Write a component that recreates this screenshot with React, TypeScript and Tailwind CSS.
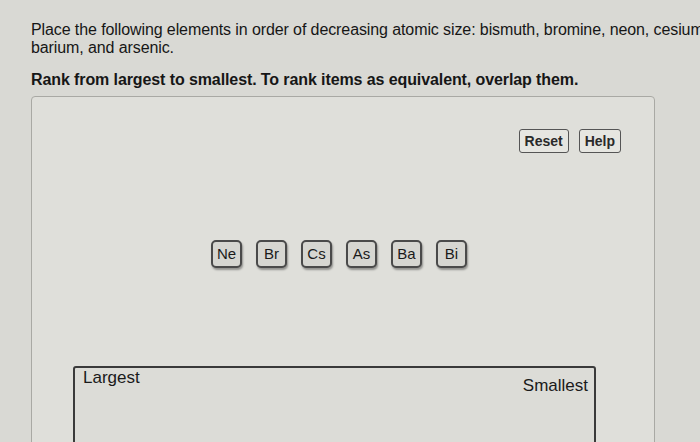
import React from 'react'

const elements = ['Ne', 'Br', 'Cs', 'As', 'Ba', 'Bi']

const Tile = ({ label }: { label: string }) => (
  <div className="flex h-[28px] w-[31px] items-center justify-center rounded-[5px] border-2 border-[#4a4a4a] bg-[#d6d6d1] text-[15px] text-[#1a1a1a] shadow-[1px_2px_2px_rgba(0,0,0,0.35)]">
    {label}
  </div>
)

const TextButton = ({ label }: { label: string }) => (
  <button className="h-[24px] rounded-[3px] border border-[#555] bg-[#e6e6e1] px-[5px] text-[14px] font-bold text-[#2a2a2a]">
    {label}
  </button>
)

export default function App() {
  return (
    <div
      className="relative h-[442px] w-[700px] overflow-hidden bg-[#d9d9d4] text-[#161616]"
      style={{ fontFamily: '"Liberation Sans", Arial, sans-serif' }}
    >
      <div className="pl-[31px] pt-[21px]">
        <p className="whitespace-nowrap text-[16px] leading-[18px] tracking-[-0.1px]">
          Place the following elements in order of decreasing atomic size: bismuth, bromine, neon, cesium,
          <br />
          barium, and arsenic.
        </p>
        <p className="mt-[14px] whitespace-nowrap text-[16px] font-bold leading-[18px] tracking-[-0.1px]">
          Rank from largest to smallest. To rank items as equivalent, overlap them.
        </p>
      </div>

      <div className="ml-[31px] mt-[7px] h-[400px] w-[624px] rounded-t-[4px] border border-[#a9a9a4] bg-[#dfdfda]">
        <div className="flex justify-end gap-[10px] pr-[33px] pt-[32px]">
          <TextButton label="Reset" />
          <TextButton label="Help" />
        </div>

        <div className="ml-[179px] mt-[87px] flex gap-[14px]">
          {elements.map((e) => (
            <Tile key={e} label={e} />
          ))}
        </div>

        <div className="ml-[41px] mt-[98px] h-[120px] w-[523px] rounded-t-[3px] border-2 border-[#3a3a3a] bg-[#dcdcd7]">
          <div className="flex justify-between pl-[8px] pr-[6px] text-[17px] leading-[19px] text-[#1a1a1a]">
            <span>Largest</span>
            <span className="mt-[8px]">Smallest</span>
          </div>
        </div>
      </div>
    </div>
  )
}
